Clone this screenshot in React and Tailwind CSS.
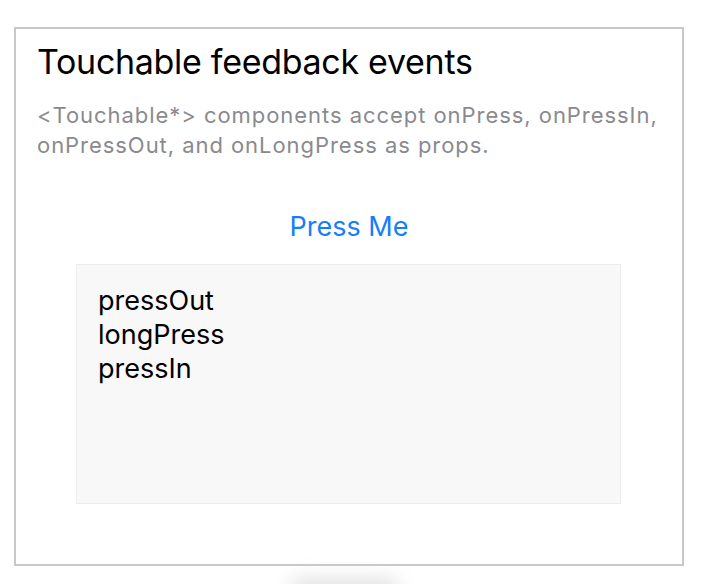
export default function App() {
  const events = ['pressOut', 'longPress', 'pressIn']

  return (
    <div className="relative h-[584px] w-[702px] overflow-hidden bg-white font-['Inter',sans-serif]">
      <div className="ml-[14px] mt-[27px] h-[539px] w-[670px] border-2 border-[#c8c8c8] pl-[21px] pr-[8px] pt-[12px]">
        <h1 className="text-[34px] leading-[41px] tracking-[-0.3px] text-black">Touchable feedback events</h1>
        <p className="mt-[18px] text-[22px] leading-[30px] tracking-[0.95px] text-[#8a8a8e]">
          &lt;Touchable*&gt; components accept onPress, onPressIn, onPressOut, and onLongPress as props.
        </p>
        <div className="mt-[51px] flex justify-center pr-[13px]">
          <button className="text-[27px] leading-[32px] text-[#147efb]">Press Me</button>
        </div>
        <div className="ml-[39px] mt-[21px] h-[240px] w-[545px] border border-[#ececec] bg-[#f8f8f8] px-[21px] pt-[19px]">
          {events.map((e) => (
            <div key={e} className="text-[27px] leading-[34px] text-black">{e}</div>
          ))}
        </div>
      </div>
      {/* soft shadow peeking under the card */}
      <div className="absolute left-[290px] top-[578px] h-[22px] w-[110px] rounded-full bg-[#e2e2e2] blur-[9px]" />
    </div>
  )
}
